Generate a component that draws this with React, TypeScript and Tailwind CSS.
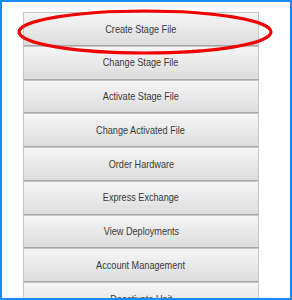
import React from "react";

const items = [
  "Create Stage File",
  "Change Stage File",
  "Activate Stage File",
  "Change Activated File",
  "Order Hardware",
  "Express Exchange",
  "View Deployments",
  "Account Management",
  "Deactivate Unit",
];

export default function App() {
  return (
    <div
      className="relative w-[292px] h-[300px] overflow-hidden bg-white border-2 border-[#1a8cf0]"
      style={{ fontFamily: '"Liberation Sans", Arial, sans-serif' }}
    >
      <div className="flex flex-col pl-[21px] pt-[10px]">
        {items.map((t) => (
          <div
            key={t}
            className="w-[236px] h-[33.75px] shrink-0 flex items-center justify-center border border-[#c4c4c4] border-b-[#a9a9a9] bg-gradient-to-b from-[#f6f6f6] to-[#dcdcdc] text-[11px] text-[#3a3a3a]"
          >
            <span className="inline-block whitespace-nowrap scale-x-[0.83]">{t}</span>
          </div>
        ))}
      </div>
      <svg
        className="absolute left-0 top-0 pointer-events-none"
        width="292"
        height="300"
        viewBox="-2 -2 292 300"
      >
        <ellipse cx="141" cy="28" rx="126" ry="21" fill="none" stroke="#f00000" strokeWidth="3.2" />
      </svg>
    </div>
  );
}
